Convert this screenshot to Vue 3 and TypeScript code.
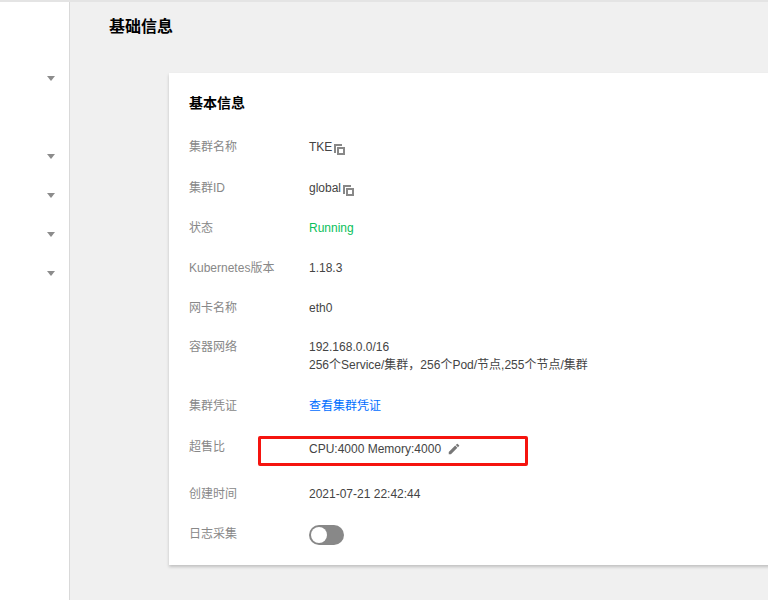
<script setup lang="ts">
const carets: number[] = [1, 2, 3, 4, 5]
</script>

<template>
  <div class="page">
    <aside class="side">
      <span v-for="c in carets" :key="c" class="caret" :class="'c' + c"></span>
    </aside>
    <main class="main">
      <h1 class="title">基础信息</h1>
      <section class="card">
        <h2 class="card-title">基本信息</h2>
        <div class="row first">
          <div class="label">集群名称</div>
          <div class="value">TKE<svg class="copy" viewBox="0 0 11 11"><path d="M0 0h8v2H2v7H0z" fill="#888" /><path fill-rule="evenodd" d="M3 3h8v8H3zM5 5v4h4V5z" fill="#888" /></svg></div>
        </div>
        <div class="row">
          <div class="label">集群ID</div>
          <div class="value">global<svg class="copy" viewBox="0 0 11 11"><path d="M0 0h8v2H2v7H0z" fill="#888" /><path fill-rule="evenodd" d="M3 3h8v8H3zM5 5v4h4V5z" fill="#888" /></svg></div>
        </div>
        <div class="row">
          <div class="label">状态</div>
          <div class="value ok">Running</div>
        </div>
        <div class="row">
          <div class="label">Kubernetes版本</div>
          <div class="value">1.18.3</div>
        </div>
        <div class="row eth">
          <div class="label">网卡名称</div>
          <div class="value">eth0</div>
        </div>
        <div class="row network">
          <div class="label">容器网络</div>
          <div class="value">192.168.0.0/16<br />256个Service/集群，256个Pod/节点,255个节点/集群</div>
        </div>
        <div class="row cred">
          <div class="label">集群凭证</div>
          <div class="value link">查看集群凭证</div>
        </div>
        <div class="row oversell">
          <div class="label">超售比</div>
          <div class="value">CPU:4000 Memory:4000<svg class="pencil" viewBox="0 0 24 24"><path d="M3 17.25V21h3.75L17.81 9.94l-3.75-3.75L3 17.25zM20.71 7.04a1 1 0 0 0 0-1.41l-2.34-2.34a1 1 0 0 0-1.41 0l-1.83 1.83 3.75 3.75 1.83-1.83z" fill="#777" /></svg></div>
          <div class="mark"></div>
        </div>
        <div class="row">
          <div class="label">创建时间</div>
          <div class="value">2021-07-21 22:42:44</div>
        </div>
        <div class="row last">
          <div class="label">日志采集</div>
          <div class="value"><span class="switch"><span class="knob"></span></span></div>
        </div>
      </section>
    </main>
  </div>
</template>

<style>
html, body { margin: 0; overflow: hidden; }
</style>

<style scoped>
.page {
  display: flex;
  width: 768px;
  height: 600px;
  box-sizing: border-box;
  border-top: 2px solid #e4e4e4;
  overflow: hidden;
  font-family: "Liberation Sans", "Noto Sans CJK SC", sans-serif;
  font-size: 12px;
  line-height: 18px;
  color: #444;
}
.side {
  position: relative;
  flex: 0 0 69px;
  background: #fff;
  border-right: 1px solid #d9d9d9;
}
.caret {
  position: absolute;
  left: 47px;
  width: 0;
  height: 0;
  border-left: 4px solid transparent;
  border-right: 4px solid transparent;
  border-top: 5px solid #8c8c8c;
}
.c1 { top: 74px; }
.c2 { top: 152px; }
.c3 { top: 191px; }
.c4 { top: 230px; }
.c5 { top: 269px; }
.main {
  flex: 1;
  min-width: 0;
  background: #f0f0f0;
  padding: 14px 0 0 39px;
}
.title {
  margin: 0 0 35px;
  font-size: 16px;
  line-height: 22px;
  font-weight: 700;
  color: #000;
}
.card {
  margin-left: 60px;
  width: 640px;
  height: 492px;
  box-sizing: border-box;
  background: #fff;
  box-shadow: 0 2px 3px rgba(0, 0, 0, 0.2);
  padding: 20px 0 0 20px;
}
.card-title {
  margin: 0 0 25px;
  font-size: 14px;
  line-height: 20px;
  font-weight: 700;
  color: #000;
}
.row {
  position: relative;
  display: flex;
  margin-bottom: 22px;
}
.first { margin-bottom: 23px; }
.network { margin-bottom: 23px; }
.eth { margin-bottom: 21px; }
.cred { margin-bottom: 23px; }
.label {
  flex: 0 0 120px;
  color: #888;
}
.copy {
  width: 11px;
  height: 11px;
  margin-left: 2px;
  vertical-align: -4px;
}
.ok { color: #0abf5b; }
.link { color: #006eff; }
.oversell { margin-bottom: 29px; }
.oversell .value { position: relative; top: 2px; }
.pencil {
  width: 14px;
  height: 14px;
  margin-left: 6px;
  vertical-align: -3px;
}
.mark {
  position: absolute;
  left: 69px;
  top: -2px;
  width: 270px;
  height: 30px;
  box-sizing: border-box;
  border: 3px solid #f5140f;
  border-radius: 2px;
}
.switch {
  display: block;
  position: relative;
  width: 35px;
  height: 20px;
  border-radius: 10px;
  background: #888;
}
.knob {
  position: absolute;
  left: 2px;
  top: 2px;
  width: 16px;
  height: 16px;
  border-radius: 50%;
  background: #fff;
}
</style>
